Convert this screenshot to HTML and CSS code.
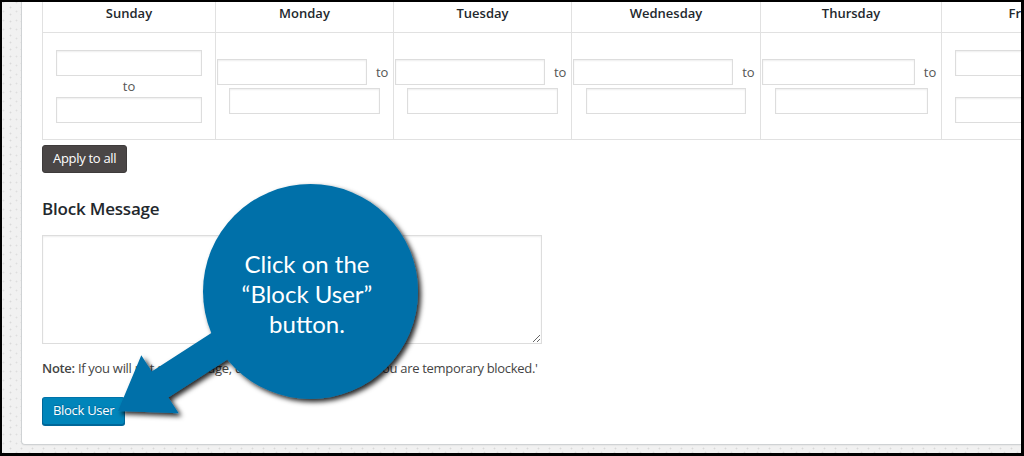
FILE: index.html
```html
<!DOCTYPE html>
<html lang="en">
<head>
<meta charset="utf-8">
<title>Block User</title>
<link rel="stylesheet" href="styles.css">
</head>
<body>
<div class="frame">
  <div class="card">
    <div class="schedule">
      <div class="day-head">Sunday</div>
      <div class="day-head">Monday</div>
      <div class="day-head">Tuesday</div>
      <div class="day-head">Wednesday</div>
      <div class="day-head">Thursday</div>
      <div class="day-head">Friday</div>
      <div class="day-head">Saturday</div>

      <div class="day-cell stacked">
        <input class="time" type="text">
        <span class="to">to</span>
        <input class="time" type="text">
      </div>
      <div class="day-cell">
        <div class="time-row"><input class="time" type="text"><span class="to">to</span></div>
        <input class="time" type="text">
      </div>
      <div class="day-cell">
        <div class="time-row"><input class="time" type="text"><span class="to">to</span></div>
        <input class="time" type="text">
      </div>
      <div class="day-cell">
        <div class="time-row"><input class="time" type="text"><span class="to">to</span></div>
        <input class="time" type="text">
      </div>
      <div class="day-cell">
        <div class="time-row"><input class="time" type="text"><span class="to">to</span></div>
        <input class="time" type="text">
      </div>
      <div class="day-cell stacked">
        <input class="time" type="text">
        <span class="to">to</span>
        <input class="time" type="text">
      </div>
      <div class="day-cell">
        <div class="time-row"><input class="time" type="text"><span class="to">to</span></div>
        <input class="time" type="text">
      </div>
    </div>

    <button class="btn btn-dark" type="button">Apply to all</button>

    <h3 class="section-title">Block Message</h3>
    <textarea class="message"></textarea>
    <p class="note"><strong>Note:</strong> If you will not set message, default message will be 'You are temporary blocked.'</p>

    <button class="btn btn-primary" type="button">Block User</button>
  </div>

  <div class="callout">
    <svg class="callout-art" viewBox="0 0 1024 456" width="1024" height="456" aria-hidden="true">
      <defs>
        <filter id="shade" x="-30%" y="-30%" width="160%" height="160%">
          <feDropShadow dx="3" dy="3" stdDeviation="2.5" flood-color="#000" flood-opacity="0.85"/>
        </filter>
      </defs>
      <g filter="url(#shade)" fill="#0170a9">
        <polygon points="251.7,306.9 151.7,371.4 141.3,355.3 118,411 178.7,413.3 168.3,397.6 268.3,333.1"/>
        <circle cx="310.5" cy="291.5" r="107.5"/>
      </g>
    </svg>
    <p class="callout-text">Click on the<br>“Block User”<br>button.</p>
  </div>
</div>
</body>
</html>
```

FILE: styles.css
```css
* { box-sizing: border-box; }

html, body {
  margin: 0;
  padding: 0;
  background: #000;
}

body {
  font-family: "Open Sans", "Noto Sans", sans-serif;
  font-size: 13px;
  color: #444;
  width: 1024px;
  height: 456px;
  overflow: hidden;
}

.frame {
  position: relative;
  margin: 2px 3px 3px 2px;
  height: 451px;
  padding-left: 19px;
  background-color: #f1f1f1;
  background-image:
    radial-gradient(circle, #d9d9d9 0.7px, transparent 1.2px),
    radial-gradient(circle, #dedede 0.7px, transparent 1.2px);
  background-size: 11px 7px, 13px 9px;
  background-position: 3px 2px, 8px 5px;
  overflow: hidden;
}

.card {
  background: #fff;
  border-left: 1px solid #cfd2d4;
  border-bottom: 1px solid #cfd2d4;
  border-bottom-left-radius: 4px;
  box-shadow: 0 1px 1px rgba(0, 0, 0, .04);
  padding: 0 0 19px 20px;
}

/* schedule grid */
.schedule {
  display: grid;
  grid-template-columns: 173px 178px 178px 189px 181px 173px 178px;
  width: max-content;
  border-left: 1px solid #e1e1e1;
}

.day-head {
  height: 31px;
  padding: 0 0 8px;
  line-height: 22px;
  text-align: center;
  font-size: 13px;
  font-weight: 600;
  color: #23282d;
  border-right: 1px solid #e1e1e1;
  border-bottom: 1px solid #e1e1e1;
}

.day-cell {
  height: 107px;
  display: flex;
  flex-direction: column;
  align-items: center;
  justify-content: center;
  border-right: 1px solid #e1e1e1;
  border-bottom: 1px solid #e1e1e1;
}

.time-row {
  width: 100%;
  display: flex;
  align-items: center;
  justify-content: center;
}

.time {
  display: block;
  flex: none;
  width: 85%;
  height: 26px;
  margin: 0;
  padding: 2px 6px;
  border: 1px solid #ddd;
  border-radius: 0;
  background: #fff;
  box-shadow: inset 0 1px 2px rgba(0, 0, 0, .07);
  font: inherit;
  color: #32373c;
}

.time-row + .time { margin-top: 3px; }

.to {
  font-size: 13px;
  color: #555;
  line-height: 20px;
}

.time-row .to { margin: 0 4px 0 9px; }

.stacked .to { line-height: 21px; }

/* buttons */
.btn {
  display: block;
  height: 28px;
  margin: 0;
  padding: 0 10px 1px;
  border: 1px solid transparent;
  border-radius: 3px;
  font-family: "Open Sans", "Noto Sans", sans-serif;
  font-size: 13px;
  line-height: 25px;
  letter-spacing: -0.3px;
  color: #fff;
  cursor: pointer;
}

.btn-dark {
  margin-top: 5px;
  background: #4a4646;
  border-color: #3e3b3b;
}

.btn-primary {
  margin-top: 19px;
  background: #0085ba;
  border-color: #0073aa #006799 #006799;
  box-shadow: 0 1px 0 #006799;
  text-shadow: 0 -1px 1px #006799;
}

.section-title {
  margin: 25px 0 0;
  font-size: 17px;
  line-height: 22px;
  font-weight: 600;
  letter-spacing: -0.2px;
  color: #23282d;
}

.message {
  display: block;
  width: 500px;
  height: 109px;
  margin: 15px 0 0;
  padding: 4px 6px;
  border: 1px solid #ddd;
  box-shadow: inset 0 1px 2px rgba(0, 0, 0, .07);
  font: inherit;
  resize: both;
}

.note {
  margin: 14px 0 0;
  line-height: 20px;
  font-size: 13px;
  letter-spacing: -0.3px;
  color: #444;
}

.note strong { font-weight: 600; }

/* callout overlay */
.callout {
  position: absolute;
  left: -2px;
  top: -2px;
  width: 1024px;
  height: 456px;
  pointer-events: none;
}

.callout-art {
  display: block;
}

.callout-text {
  position: absolute;
  left: 203px;
  top: 249px;
  width: 208px;
  margin: 0;
  text-align: center;
  font-family: Lato, "Open Sans", sans-serif;
  font-size: 24px;
  line-height: 30px;
  color: #fff;
}
```
